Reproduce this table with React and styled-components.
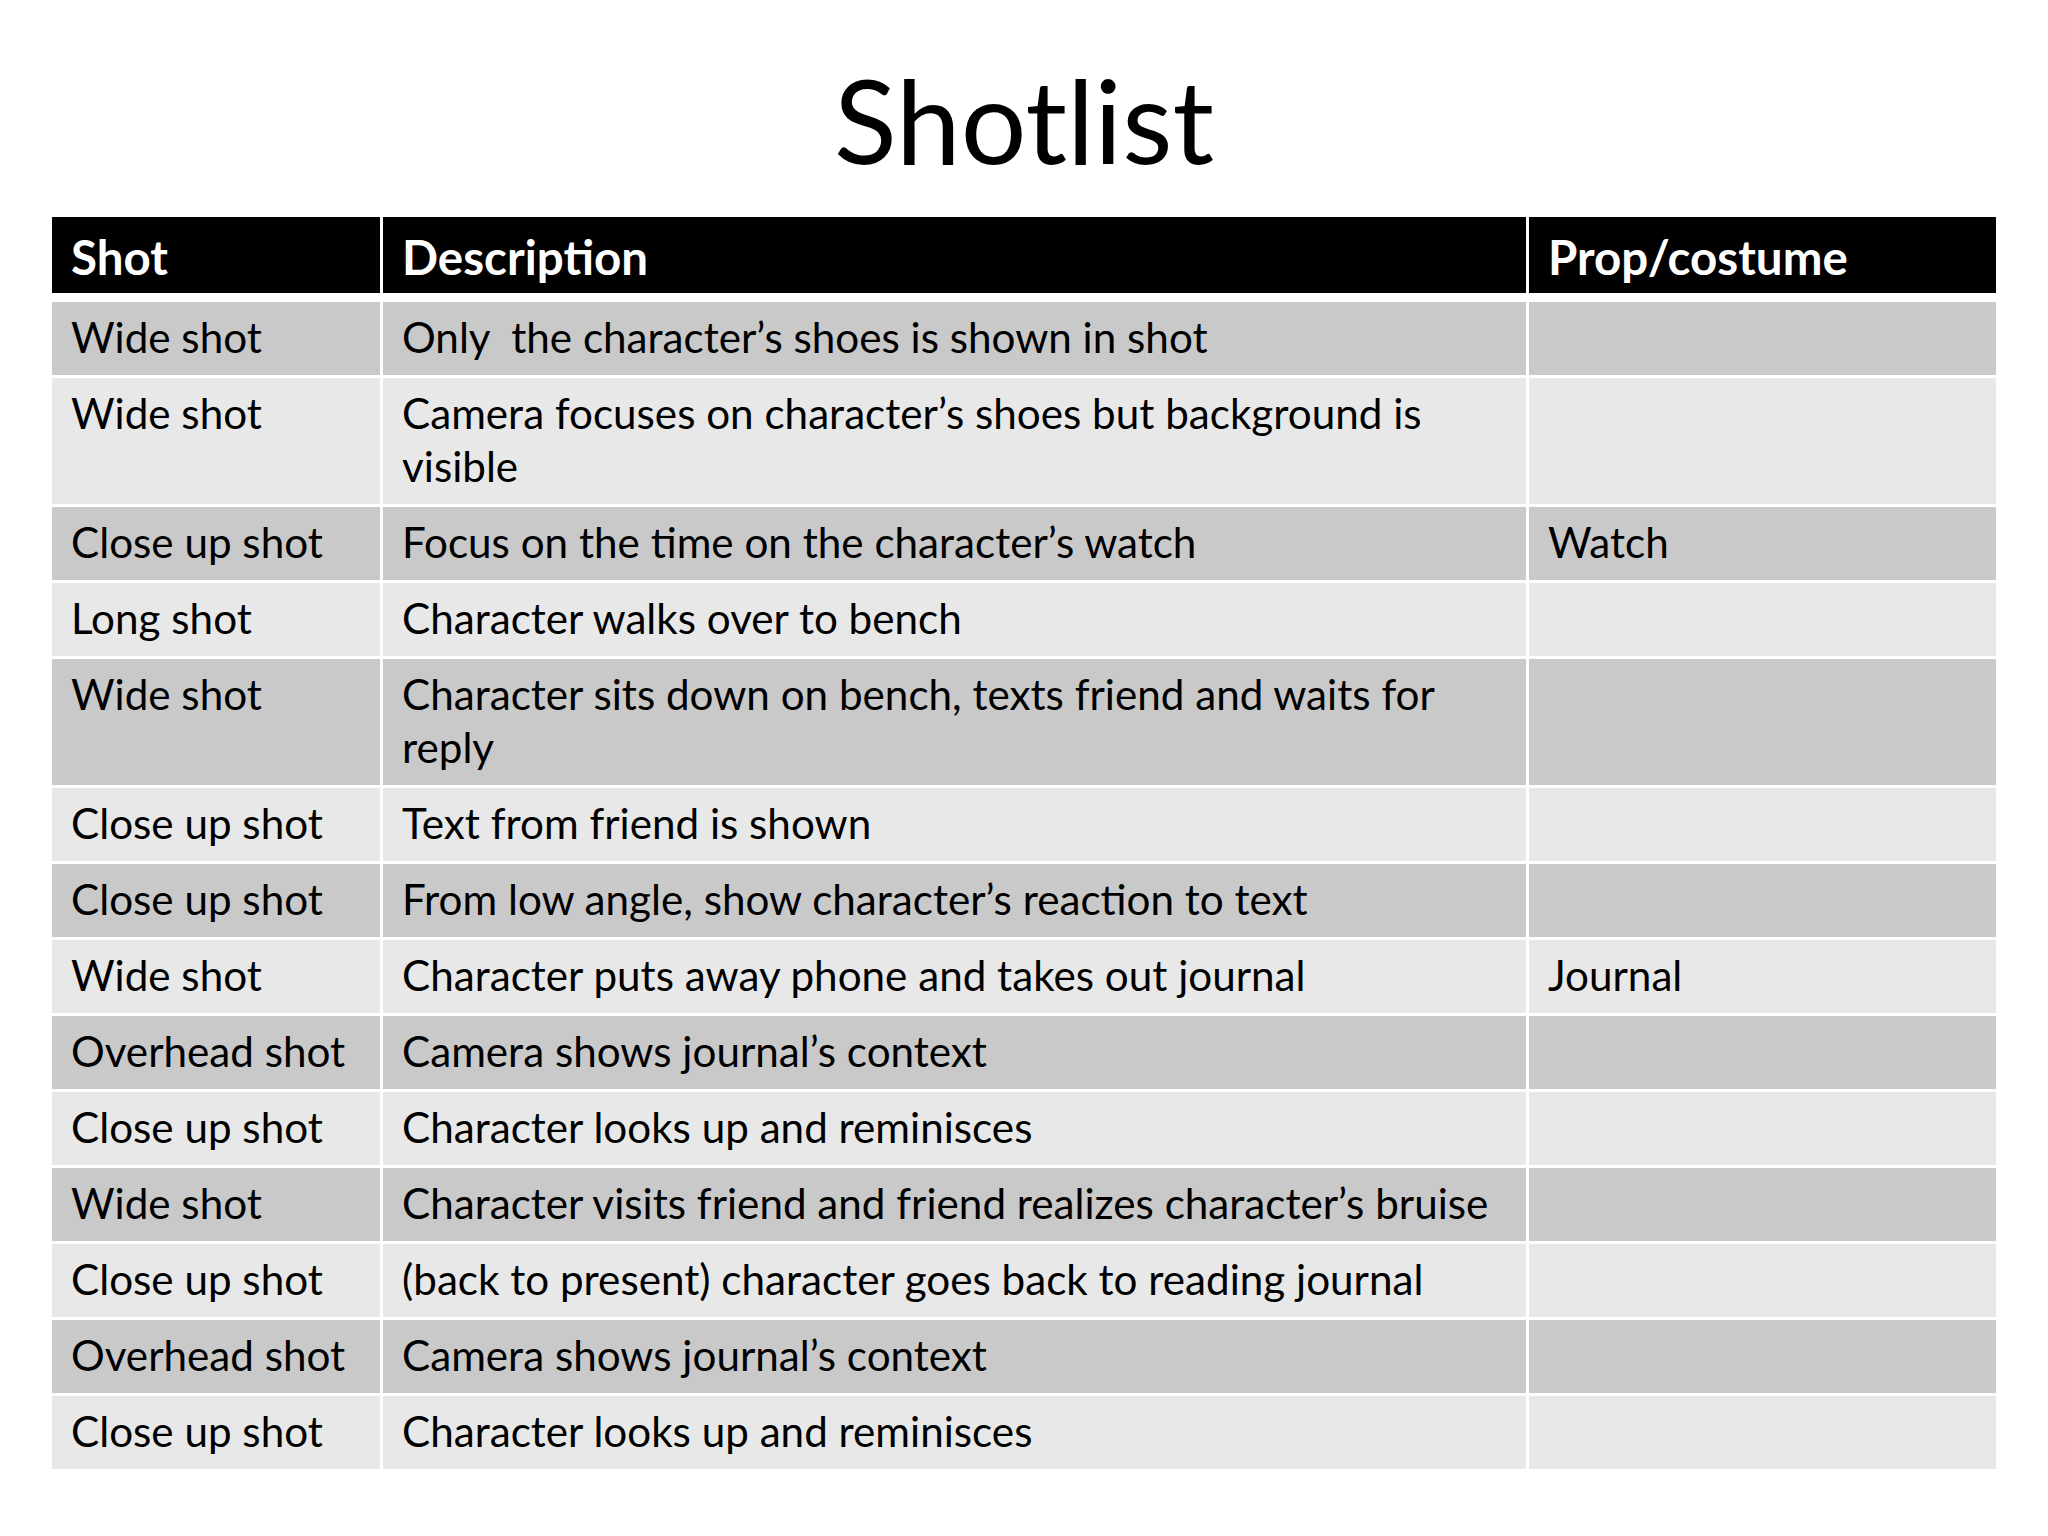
import React from "react";
import styled, { createGlobalStyle } from "styled-components";

const GlobalStyle = createGlobalStyle`
  html, body {
    margin: 0;
    padding: 0;
    background: #fff;
  }
  body {
    font-family: Lato, "Liberation Sans", sans-serif;
    color: #000;
  }
`;

const Slide = styled.main`
  width: 2048px;
  height: 1536px;
  display: flex;
  flex-direction: column;
  align-items: center;
  box-sizing: border-box;
  padding-top: 63px;
`;

const Title = styled.h1`
  margin: 0 0 40px;
  font-size: 116px;
  font-weight: 400;
  line-height: 114px;
  height: 114px;
`;

const Table = styled.div`
  display: grid;
  grid-template-columns: 328px 1143px 467px;
  column-gap: 3px;
  row-gap: 3px;
  width: 1944px;
`;

const HeadCell = styled.div`
  background: #000;
  color: #fff;
  font-weight: 700;
  font-size: 47.5px;
  line-height: 56px;
  padding: 12px 19px 8px;
  margin-bottom: 6px;
  white-space: nowrap;
`;

const Cell = styled.div`
  background: ${(p) => (p.$dark ? "#c9c9c9" : "#e8e8e8")};
  font-size: 42.2px;
  line-height: 53px;
  padding: 8px 19px 12px;
  white-space: pre-wrap;
`;

const rows = [
  ["Wide shot", "Only  the character\u2019s shoes is shown in shot", ""],
  ["Wide shot", "Camera focuses on character\u2019s shoes but background is\nvisible", ""],
  ["Close up shot", "Focus on the time on the character\u2019s watch", "Watch"],
  ["Long shot", "Character walks over to bench", ""],
  ["Wide shot", "Character sits down on bench, texts friend and waits for\nreply", ""],
  ["Close up shot", "Text from friend is shown", ""],
  ["Close up shot", "From low angle, show character\u2019s reaction to text", ""],
  ["Wide shot", "Character puts away phone and takes out journal", "Journal"],
  ["Overhead shot", "Camera shows journal\u2019s context", ""],
  ["Close up shot", "Character looks up and reminisces", ""],
  ["Wide shot", "Character visits friend and friend realizes character\u2019s bruise", ""],
  ["Close up shot", "(back to present) character goes back to reading journal", ""],
  ["Overhead shot", "Camera shows journal\u2019s context", ""],
  ["Close up shot", "Character looks up and reminisces", ""],
];

export default function App() {
  return (
    <>
      <GlobalStyle />
      <Slide>
        <Title>Shotlist</Title>
        <Table>
          <HeadCell>Shot</HeadCell>
          <HeadCell>Description</HeadCell>
          <HeadCell>Prop/costume</HeadCell>
          {rows.map((row, i) =>
            row.map((text, j) => (
              <Cell key={`${i}-${j}`} $dark={i % 2 === 0}>
                {text}
              </Cell>
            ))
          )}
        </Table>
      </Slide>
    </>
  );
}
